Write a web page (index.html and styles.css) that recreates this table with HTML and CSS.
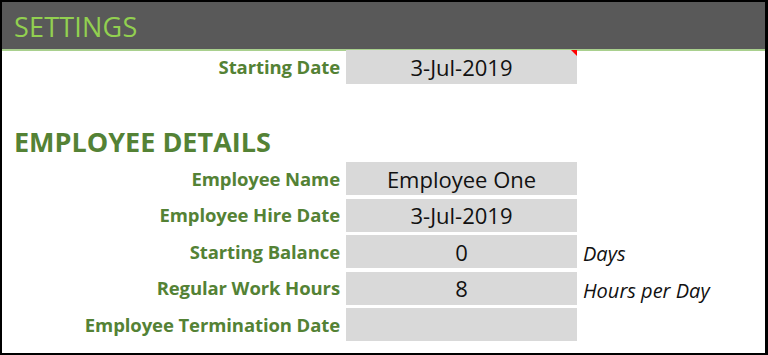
FILE: index.html
```html
<!DOCTYPE html>
<html>
<head>
<meta charset="utf-8">
<link rel="stylesheet" href="styles.css">
</head>
<body>
<div class="sheet">
  <div class="header"><span class="title">SETTINGS</span></div>
  <div class="form">
    <div class="row">
      <div class="label">Starting Date</div>
      <div class="cell flagged">3-Jul-2019<span class="flag"></span></div>
      <div class="unit"></div>
    </div>
    <div class="section">EMPLOYEE DETAILS</div>
    <div class="rows">
      <div class="row">
        <div class="label">Employee Name</div>
        <div class="cell">Employee One</div>
        <div class="unit"></div>
      </div>
      <div class="row">
        <div class="label">Employee Hire Date</div>
        <div class="cell">3-Jul-2019</div>
        <div class="unit"></div>
      </div>
      <div class="row">
        <div class="label">Starting Balance</div>
        <div class="cell">0</div>
        <div class="unit">Days</div>
      </div>
      <div class="row">
        <div class="label">Regular Work Hours</div>
        <div class="cell">8</div>
        <div class="unit">Hours per Day</div>
      </div>
      <div class="row">
        <div class="label">Employee Termination Date</div>
        <div class="cell"></div>
        <div class="unit"></div>
      </div>
    </div>
  </div>
</div>
</body>
</html>
```
FILE: styles.css
```css
* { box-sizing: border-box; }
html, body { margin: 0; padding: 0; background: #fff; }
body { font-family: "Open Sans", Lato, sans-serif; }
.sheet {
  width: 768px;
  height: 355px;
  border: 2px solid #000;
  border-right-width: 3px;
  overflow: hidden;
}
.header {
  height: 49px;
  background: #595959;
  border-bottom: 2px solid #A9D08E;
  padding-left: 12px;
  display: flex;
  align-items: center;
}
.title {
  color: #92D050;
  font-size: 27px;
  letter-spacing: 0.2px;
  padding-top: 2px;
}
.form { display: flex; flex-direction: column; }
.row {
  display: grid;
  grid-template-columns: 338px 231px auto;
  column-gap: 6px;
  height: 33px;
  align-items: center;
}
.form > .row { height: 34px; margin-top: -1px; }
.label {
  text-align: right;
  color: #548235;
  font-weight: 700;
  font-size: 18.5px;
  letter-spacing: -0.1px;
  line-height: 24px;
}
.cell {
  height: 100%;
  background: #D9D9D9;
  display: flex;
  align-items: center;
  justify-content: center;
  color: #111;
  font-size: 22px;
  position: relative;
}
.flag {
  position: absolute;
  top: 0;
  right: 0;
  width: 0;
  height: 0;
  border-top: 6px solid #FF0000;
  border-left: 6px solid transparent;
}
.unit {
  font-style: italic;
  font-size: 20px;
  color: #111;
  padding-top: 4px;
}
.section {
  height: 78px;
  padding: 40px 0 0 12px;
  color: #548235;
  font-weight: 700;
  font-size: 27px;
  line-height: 36px;
}
.rows { display: flex; flex-direction: column; gap: 3.5px; }
```
